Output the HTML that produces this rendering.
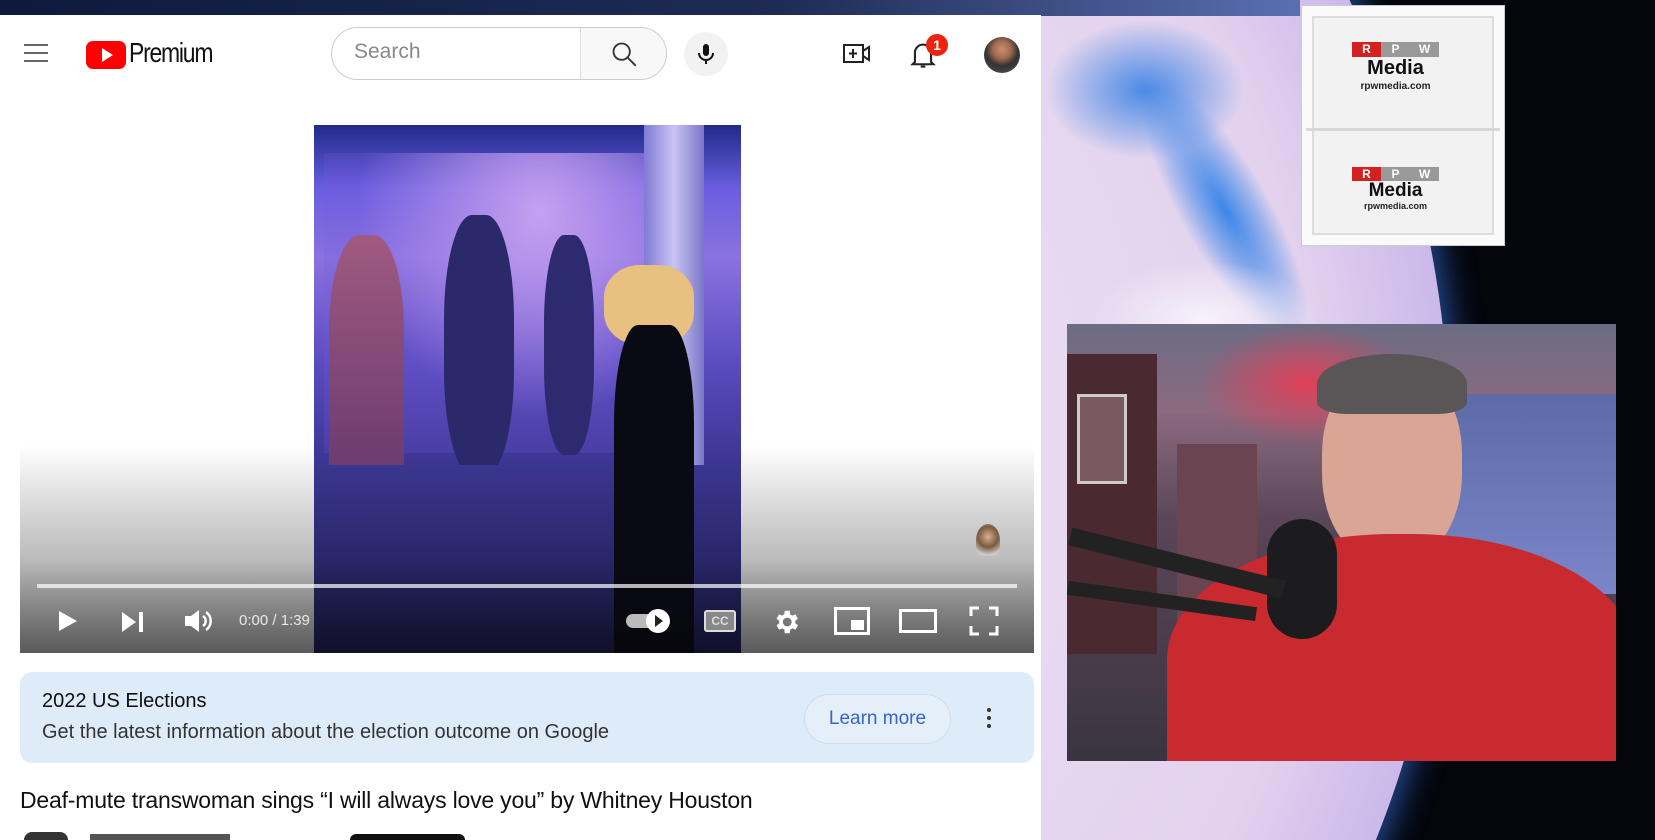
<!DOCTYPE html>
<html><head><meta charset="utf-8"><style>
*{margin:0;padding:0;box-sizing:border-box}
html,body{width:1655px;height:840px;overflow:hidden}
body{background:#05070f;font-family:"Liberation Sans",sans-serif}
#root{position:relative;width:1655px;height:840px;overflow:hidden}
.abs{position:absolute}
</style></head><body><div id="root">
<div class="abs" style="left:0;top:0;width:1655px;height:840px;background:#04060c;overflow:hidden">
<div class="abs" style="left:-50px;top:-450px;width:1500px;height:1800px;border-radius:50%;background:radial-gradient(ellipse at 50% 50%,#eee4f4 0,#e2d2ee 58%,#c8b6ea 72%,#a6c0f0 82%,#6cb0f4 89%,#3a8cf0 95%,#1f56d0 99%,#10308a 100%);box-shadow:0 0 30px 8px rgba(60,130,255,.55)"></div>
<div class="abs" style="left:1180px;top:60px;width:90px;height:300px;background:radial-gradient(ellipse,#3c86e8 0,rgba(60,134,232,.4) 45%,rgba(0,0,0,0) 70%);transform:rotate(-30deg)"></div>
<div class="abs" style="left:1045px;top:20px;width:200px;height:140px;background:radial-gradient(ellipse,#4a8ae6 0,rgba(74,138,230,.3) 50%,rgba(0,0,0,0) 70%)"></div>
<div class="abs" style="left:1090px;top:260px;width:230px;height:120px;background:radial-gradient(ellipse,#f7f2fb 0,rgba(247,242,251,0) 70%)"></div>
<div class="abs" style="left:0;top:0;width:1300px;height:16px;background:linear-gradient(90deg,#0d1a3c,#1e2b55 60%,#5a6fb0)"></div>
</div>
<div class="abs" style="left:1301px;top:5px;width:204px;height:241px;background:#f2f2f2;border:1px solid #ccc;box-shadow:inset 0 0 0 10px #fafafa,inset 0 0 0 12px #ddd"></div>
<div class="abs" style="left:1306px;top:128px;width:194px;height:3px;background:#d8d8d8"></div>
<div class="abs" style="left:1352px;top:42px;width:87px;font-weight:bold;text-align:center">
 <div style="display:flex;height:15px;font-size:12px;color:#fff;line-height:15px"><span style="flex:1;background:#d32020">R</span><span style="flex:1;background:#999">P</span><span style="flex:1;background:#999">W</span></div>
 <div style="font-size:20px;line-height:22px;color:#111">Media</div>
 <div style="font-size:10px;color:#222;margin-top:2px">rpwmedia.com</div>
</div>
<div class="abs" style="left:1352px;top:167px;width:87px;font-weight:bold;text-align:center">
 <div style="display:flex;height:14px;font-size:12px;color:#fff;line-height:14px"><span style="flex:1;background:#d32020">R</span><span style="flex:1;background:#999">P</span><span style="flex:1;background:#999">W</span></div>
 <div style="font-size:19px;line-height:20px;color:#111">Media</div>
 <div style="font-size:9px;color:#222">rpwmedia.com</div>
</div>
<div class="abs" style="left:1067px;top:324px;width:549px;height:437px;overflow:hidden;background:linear-gradient(180deg,#6b6c84 0,#8c6a80 20%,#5a4658 45%,#3a3440 100%)">
 <div class="abs" style="left:130px;top:0;width:220px;height:120px;background:radial-gradient(ellipse,#e04058 0,rgba(200,60,80,0) 70%)"></div>
 <div class="abs" style="left:370px;top:70px;width:179px;height:200px;background:linear-gradient(#5d6aa8,#7b86c8)"></div>
 <div class="abs" style="left:0;top:30px;width:90px;height:300px;background:#4a2a30"></div>
 <div class="abs" style="left:10px;top:70px;width:50px;height:90px;background:#7a5a60;border:3px solid #ccc"></div>
 <div class="abs" style="left:110px;top:120px;width:80px;height:200px;background:#6a4450"></div>
 <div class="abs" style="left:255px;top:40px;width:140px;height:200px;border-radius:45%;background:#d9a696"></div>
 <div class="abs" style="left:250px;top:30px;width:150px;height:60px;border-radius:50% 50% 20% 20%;background:#5a5658"></div>
 <div class="abs" style="left:100px;top:210px;width:470px;height:260px;border-radius:48% 48% 0 0;background:#c82a30"></div>
 <div class="abs" style="left:200px;top:195px;width:70px;height:120px;border-radius:35px;background:#1c1c1e"></div>
 <div class="abs" style="left:0;top:230px;width:220px;height:18px;background:#222;transform:rotate(14deg)"></div>
 <div class="abs" style="left:0;top:270px;width:190px;height:14px;background:#222;transform:rotate(8deg)"></div>
</div>
<div class="abs" style="left:0;top:15px;width:1041px;height:825px;background:#fff"></div>
<div class="abs" style="left:24px;top:44px;width:24px;height:2px;background:#666;box-shadow:0 8px 0 #666,0 16px 0 #666"></div>
<div class="abs" style="left:86px;top:41px;width:40px;height:28px;background:#f00;border-radius:7px"></div>
<div class="abs" style="left:102px;top:48px;width:0;height:0;border-left:11px solid #fff;border-top:7px solid transparent;border-bottom:7px solid transparent"></div>
<div class="abs" style="left:129px;top:37px;font-size:28px;color:#111;letter-spacing:-1.5px;transform:scaleX(.82);transform-origin:left">Premium</div>
<div class="abs" style="left:331px;top:27px;width:336px;height:53px;border:1px solid #ccc;border-radius:27px"></div>
<div class="abs" style="left:580px;top:28px;width:1px;height:51px;background:#ddd"></div>
<div class="abs" style="left:581px;top:28px;width:85px;height:51px;background:#f8f8f8;border-radius:0 26px 26px 0"></div>
<div class="abs" style="left:354px;top:40px;font-size:21px;color:#888">Search</div>
<svg class="abs" style="left:610px;top:40px" width="28" height="28" viewBox="0 0 24 24" fill="none" stroke="#333" stroke-width="1.6"><circle cx="10" cy="10" r="7"/><path d="M15 15l7 7"/></svg>
<div class="abs" style="left:684px;top:32px;width:44px;height:44px;border-radius:50%;background:#f2f2f2"></div>
<svg class="abs" style="left:694px;top:42px" width="24" height="24" viewBox="0 0 24 24"><rect x="9" y="2" width="6" height="12" rx="3" fill="#111"/><path d="M5 11a7 7 0 0014 0M12 18v4" stroke="#111" stroke-width="2" fill="none"/></svg>
<svg class="abs" style="left:842px;top:41px" width="30" height="26" viewBox="0 0 30 26" fill="none" stroke="#222" stroke-width="2"><rect x="2" y="4" width="19" height="17"/><path d="M21 10l6-4v13l-6-4M11 8v9M7 12.5h8"/></svg>
<svg class="abs" style="left:909px;top:40px" width="28" height="30" viewBox="0 0 24 26" fill="none" stroke="#222" stroke-width="1.8"><path d="M5 19V11a7 7 0 0114 0v8l2 2H3zM10 23h4"/></svg>
<div class="abs" style="left:926px;top:34px;width:22px;height:22px;border-radius:50%;background:#e21;color:#fff;font-size:14px;font-weight:bold;text-align:center;line-height:22px">1</div>
<div class="abs" style="left:984px;top:37px;width:36px;height:36px;border-radius:50%;background:radial-gradient(circle at 50% 35%,#c99070 0,#a06b50 30%,#333 55%,#555 100%)"></div>
<div class="abs" style="left:20px;top:445px;width:1014px;height:208px;background:linear-gradient(#fff,#ccc 40%,#8a8a8a)"></div>
<div class="abs" style="left:314px;top:125px;width:427px;height:528px;overflow:hidden;background:linear-gradient(180deg,#1f2a8a 0,#6a5ee0 12%,#8a72e0 25%,#5a4cc0 45%,#3a3490 65%,#24225a 80%,#14142c 100%)">
 <div class="abs" style="left:10px;top:28px;width:360px;height:300px;background:radial-gradient(ellipse at 60% 20%,#c6a0f0,rgba(120,90,220,.2) 60%)"></div>
 <div class="abs" style="left:15px;top:110px;width:75px;height:240px;border-radius:40% 40% 0 0;background:linear-gradient(#a05a80,#6a3a70)"></div>
 <div class="abs" style="left:130px;top:90px;width:70px;height:260px;border-radius:40%;background:#2a2a6a"></div>
 <div class="abs" style="left:230px;top:110px;width:50px;height:220px;border-radius:40%;background:#2e2a70"></div>
 <div class="abs" style="left:330px;top:0;width:60px;height:528px;background:linear-gradient(90deg,#7f7ad6,#c9c4f2,#7a76c8)"></div>
 <div class="abs" style="left:290px;top:140px;width:90px;height:80px;border-radius:40%;background:#e8c080"></div>
 <div class="abs" style="left:0;top:340px;width:427px;height:190px;background:linear-gradient(#3a3690,#181840)"></div>
 <div class="abs" style="left:300px;top:200px;width:80px;height:330px;background:#0a0a14;border-radius:30% 30% 0 0"></div>
</div>
<div class="abs" style="left:20px;top:560px;width:1014px;height:93px;background:linear-gradient(rgba(0,0,0,0),rgba(0,0,0,.35))"></div>
<div class="abs" style="left:37px;top:584px;width:980px;height:4px;background:rgba(255,255,255,.7)"></div>
<svg class="abs" style="left:55px;top:609px" width="24" height="24" viewBox="0 0 24 24"><path d="M4 2l18 10-18 10z" fill="#fff"/></svg>
<svg class="abs" style="left:120px;top:610px" width="26" height="24" viewBox="0 0 26 24"><path d="M2 2l14 10-14 10z" fill="#fff"/><rect x="19" y="2" width="4" height="20" fill="#fff"/></svg>
<svg class="abs" style="left:183px;top:608px" width="30" height="26" viewBox="0 0 30 26" fill="#fff"><path d="M2 8h6l8-6v22l-8-6H2z"/><path d="M20 8a6 6 0 010 10M23 4a11 11 0 010 18" stroke="#fff" stroke-width="2.5" fill="none"/></svg>
<div class="abs" style="left:239px;top:612px;font-size:15px;color:#e8e8e8">0:00 / 1:39</div>
<div class="abs" style="left:626px;top:614px;width:36px;height:14px;border-radius:7px;background:#bbb"></div>
<div class="abs" style="left:646px;top:609px;width:24px;height:24px;border-radius:50%;background:#fff"></div>
<div class="abs" style="left:655px;top:615px;border-left:8px solid #222;border-top:6px solid transparent;border-bottom:6px solid transparent"></div>
<div class="abs" style="left:704px;top:610px;width:32px;height:22px;border:2px solid #ddd;border-radius:3px;background:#888;color:#ddd;font-size:12px;font-weight:bold;text-align:center;line-height:18px">CC</div>
<svg class="abs" style="left:771px;top:607px" width="30" height="30" viewBox="0 0 24 24"><path fill="#fff" d="M19.4 13a7.5 7.5 0 000-2l2.1-1.6-2-3.5-2.5 1a7 7 0 00-1.7-1L15 3h-4l-.4 2.9a7 7 0 00-1.7 1l-2.5-1-2 3.5L6.6 11a7.5 7.5 0 000 2l-2.1 1.6 2 3.5 2.5-1a7 7 0 001.7 1L11 21h4l.4-2.9a7 7 0 001.7-1l2.5 1 2-3.5zM13 15.5a3.5 3.5 0 110-7 3.5 3.5 0 010 7z"/></svg>
<div class="abs" style="left:834px;top:607px;width:36px;height:28px;border:3px solid #fff"></div>
<div class="abs" style="left:851px;top:620px;width:13px;height:10px;background:#fff"></div>
<div class="abs" style="left:899px;top:609px;width:38px;height:24px;border:3px solid #fff"></div>
<svg class="abs" style="left:969px;top:606px" width="30" height="30" viewBox="0 0 30 30" fill="none" stroke="#fff" stroke-width="3"><path d="M2 10V2h8M20 2h8v8M28 20v8h-8M10 28H2v-8"/></svg>
<div class="abs" style="left:976px;top:524px;width:24px;height:32px;border-radius:50% 50% 30% 30%;background:radial-gradient(circle at 50% 40%,#d8b090 0,#7a5a40 45%,#ccc 80%)"></div>
<div class="abs" style="left:20px;top:672px;width:1014px;height:91px;background:#deecf9;border-radius:12px"></div>
<div class="abs" style="left:42px;top:690px;font-size:20px;color:#0f0f0f">2022 US Elections</div>
<div class="abs" style="left:42px;top:721px;font-size:20px;color:#333">Get the latest information about the election outcome on Google</div>
<div class="abs" style="left:804px;top:694px;width:147px;height:50px;border:1px solid #d0dcea;border-radius:25px;background:#e4effa;color:#3665c8;font-size:19px;text-align:center;line-height:48px">Learn more</div>
<div class="abs" style="left:987px;top:708px;width:4px;height:4px;border-radius:50%;background:#333;box-shadow:0 8px 0 #333,0 16px 0 #333"></div>
<div class="abs" style="left:20px;top:787px;font-size:23px;color:#111;letter-spacing:-.2px">Deaf-mute transwoman sings “I will always love you” by Whitney Houston</div>
<div class="abs" style="left:24px;top:832px;width:44px;height:8px;border-radius:22px 22px 0 0;background:#333"></div>
<div class="abs" style="left:90px;top:834px;width:140px;height:6px;background:#555"></div>
<div class="abs" style="left:350px;top:834px;width:115px;height:6px;border-radius:6px 6px 0 0;background:#111"></div>
</div></body></html>
